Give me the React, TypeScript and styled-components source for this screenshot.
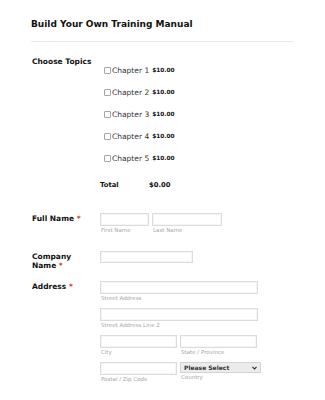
import styled, { createGlobalStyle } from "styled-components";

const GlobalStyle = createGlobalStyle`
  body {
    margin: 0;
    background: #fff;
    font-family: "DejaVu Sans", Verdana, sans-serif;
    color: #111;
  }
`;

const Page = styled.div`
  width: 325px;
  padding: 0 31px;
  box-sizing: border-box;
`;

const Header = styled.header`
  padding: 18px 0 11px;
  border-bottom: 1px solid #e8e8e8;
`;

const Title = styled.h1`
  margin: 0;
  font-size: 9px;
  line-height: 12px;
  font-weight: bold;
  color: #111;
`;

const Row = styled.div<{ $top: number }>`
  display: grid;
  grid-template-columns: 68px 1fr;
  align-items: start;
  margin-top: ${(p) => p.$top}px;
  padding-left: 1px;
`;

const Label = styled.div<{ $pad?: number }>`
  font-size: 7.5px;
  line-height: 8.5px;
  font-weight: bold;
  padding-top: ${(p) => p.$pad ?? 0}px;
  padding-right: 6px;
  color: #111;
`;

const Star = styled.span`
  color: #e0302a;
`;

const Topics = styled.div`
  margin-top: 1px;
`;

const Topic = styled.label`
  display: flex;
  align-items: center;
  height: 22px;
  padding-left: 4px;
`;

const Check = styled.span`
  width: 7px;
  height: 7px;
  border: 1px solid #a5a5a5;
  border-radius: 1px;
  box-sizing: border-box;
  margin-right: 1px;
  margin-top: 1px;
`;

const TopicName = styled.span`
  font-size: 7.5px;
  color: #333;
`;

const Price = styled.span`
  font-size: 5.8px;
  font-weight: bold;
  margin-left: 3px;
  color: #111;
`;

const TotalRow = styled.div`
  display: grid;
  grid-template-columns: 49px auto;
  margin-top: 10px;
  height: 12px;
  align-items: center;
  font-size: 6.8px;
  font-weight: bold;
`;

const Fields = styled.div`
  display: flex;
  flex-wrap: wrap;
  column-gap: 3px;
`;

const Field = styled.div<{ $w: number }>`
  width: ${(p) => p.$w}px;
  margin-bottom: 5px;
`;

const Input = styled.div<{ $h?: number }>`
  height: ${(p) => p.$h ?? 13}px;
  border: 1px solid #dcdcdc;
  box-sizing: border-box;
  background: #fff;
  box-shadow: inset 0 0 0 1px #f6f6f6;
`;

const Sub = styled.div`
  font-size: 5.5px;
  line-height: 9px;
  color: #a8a8a8;
  padding-left: 1px;
`;

const Select = styled.div`
  height: 11px;
  border: 1px solid #d4d4d4;
  box-sizing: border-box;
  background: #ececec;
  display: flex;
  align-items: center;
  justify-content: space-between;
  padding: 0 3px 0 3px;
  font-size: 6px;
  font-weight: bold;
  color: #333;
`;

function Chevron() {
  return (
    <svg width="5" height="4" viewBox="0 0 5 4">
      <path d="M0.5 0.8 L2.5 3 L4.5 0.8" fill="none" stroke="#222" strokeWidth="1.1" />
    </svg>
  );
}

const chapters = [1, 2, 3, 4, 5];

export default function App() {
  return (
    <Page>
      <GlobalStyle />
      <Header>
        <Title>Build Your Own Training Manual</Title>
      </Header>

      <Row $top={16}>
        <Label>Choose Topics</Label>
        <div>
          <Topics>
            {chapters.map((n) => (
              <Topic key={n}>
                <Check />
                <TopicName>Chapter {n}</TopicName>
                <Price>$10.00</Price>
              </Topic>
            ))}
          </Topics>
          <TotalRow>
            <span>Total</span>
            <span>$0.00</span>
          </TotalRow>
        </div>
      </Row>

      <Row $top={22}>
        <Label $pad={2}>
          Full Name <Star>*</Star>
        </Label>
        <Fields>
          <Field $w={49}>
            <Input />
            <Sub>First Name</Sub>
          </Field>
          <Field $w={70}>
            <Input />
            <Sub>Last Name</Sub>
          </Field>
        </Fields>
      </Row>

      <Row $top={11}>
        <Label $pad={2}>
          Company Name <Star>*</Star>
        </Label>
        <Fields>
          <Field $w={93}>
            <Input $h={12} />
          </Field>
        </Fields>
      </Row>

      <Row $top={11}>
        <Label $pad={2}>
          Address <Star>*</Star>
        </Label>
        <Fields>
          <Field $w={158}>
            <Input />
            <Sub>Street Address</Sub>
          </Field>
          <Field $w={158}>
            <Input />
            <Sub>Street Address Line 2</Sub>
          </Field>
          <Field $w={77}>
            <Input />
            <Sub>City</Sub>
          </Field>
          <Field $w={77}>
            <Input />
            <Sub>State / Province</Sub>
          </Field>
          <Field $w={77}>
            <Input />
            <Sub>Postal / Zip Code</Sub>
          </Field>
          <Field $w={81}>
            <Select>
              <span>Please Select</span>
              <Chevron />
            </Select>
            <Sub>Country</Sub>
          </Field>
        </Fields>
      </Row>
    </Page>
  );
}
